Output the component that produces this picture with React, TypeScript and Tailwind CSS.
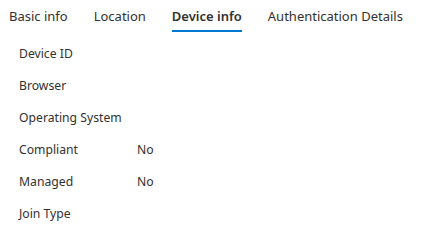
import React, { useState } from 'react';

const tabs = ['Basic info', 'Location', 'Device info', 'Authentication Details'];

const rows: { label: string; value?: string }[] = [
  { label: 'Device ID' },
  { label: 'Browser' },
  { label: 'Operating System' },
  { label: 'Compliant', value: 'No' },
  { label: 'Managed', value: 'No' },
  { label: 'Join Type' },
];

const App: React.FC = () => {
  const [active, setActive] = useState('Device info');

  return (
    <div className="w-[427px] h-[240px] bg-white text-[#323130] font-['Noto_Sans',sans-serif] overflow-hidden">
      {/* Tabs */}
      <div className="flex h-8 pl-[9px] gap-[26px]">
        {tabs.map(tab => (
          <button
            key={tab}
            type="button"
            onClick={() => setActive(tab)}
            className={`relative h-8 shrink-0 whitespace-nowrap flex items-center text-[13px] leading-none ${
              active === tab ? 'font-semibold' : 'font-normal'
            }`}
          >
            {tab}
            {active === tab && (
              <span className="absolute left-0 right-0 bottom-0 h-[2px] bg-[#0078d4]" />
            )}
          </button>
        ))}
      </div>

      {/* Detail rows */}
      <div className="mt-[6px] pl-[19px]">
        {rows.map(row => (
          <div key={row.label} className="flex h-8 items-center text-[12.2px]">
            <span className="w-[118px]">{row.label}</span>
            <span>{row.value}</span>
          </div>
        ))}
      </div>
    </div>
  );
};

export default App;
